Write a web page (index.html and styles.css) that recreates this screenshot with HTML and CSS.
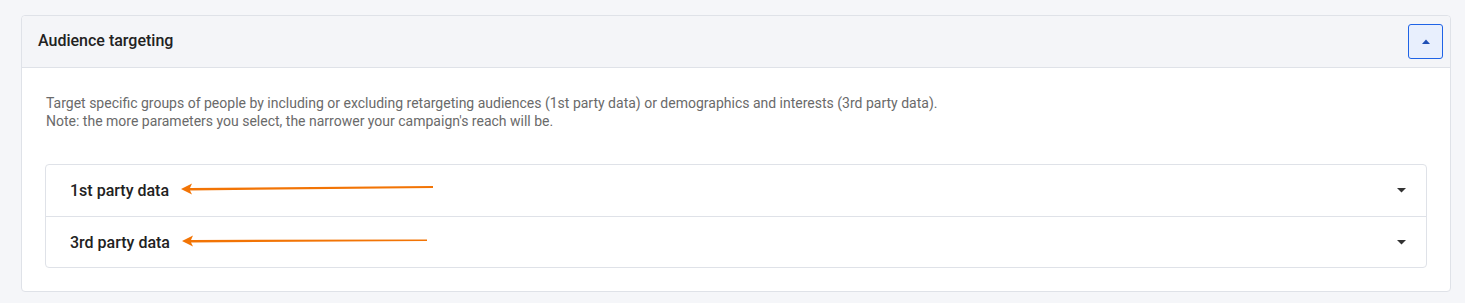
FILE: index.html
```html
<!DOCTYPE html>
<html lang="en">
<head>
    <meta charset="UTF-8">
    <meta name="viewport" content="width=device-width, initial-scale=1.0">
    <title>Audience targeting</title>
    <link rel="stylesheet" href="styles.css">
</head>
<body>

<!-- Pannello targeting -->
<div class="card">
    <div class="card-header">
        <h2>Audience targeting</h2>
        <button class="toggle" type="button">
            <svg width="8" height="5" viewBox="0 0 8 5"><path d="M0 5 L4 0.5 L8 5 Z" fill="#1f4fb5"/></svg>
        </button>
    </div>
    <div class="card-body">
        <p class="intro">Target specific groups of people by including or excluding retargeting audiences (1st party data) or demographics and interests (3rd party data).<br>Note: the more parameters you select, the narrower your campaign's reach will be.</p>
        <div class="accordion">
            <div class="row">
                <span>1st party data</span>
                <svg width="9" height="5" viewBox="0 0 9 5"><path d="M0 0 L9 0 L4.5 4.5 Z" fill="#333"/></svg>
            </div>
            <div class="row">
                <span>3rd party data</span>
                <svg width="9" height="5" viewBox="0 0 9 5"><path d="M0 0 L9 0 L4.5 4.5 Z" fill="#333"/></svg>
            </div>
        </div>
    </div>
</div>

<!-- Frecce di annotazione -->
<svg class="marks" width="1465" height="303" viewBox="0 0 1465 303">
    <path d="M181 189 L192 183.5 L190 188 L433 186 L433 188 L190 190.5 L192 194.5 Z" fill="#f27405"/>
    <path d="M182 241 L193 235.5 L191 240 L427 239.5 L427 241 L191 242.5 L193 246.5 Z" fill="#f27405"/>
</svg>

</body>
</html>
```

FILE: styles.css
```css
/* Impostazioni generali */
body {
    margin: 0;
    padding: 15px 14px 12px 21px;
    font-family: Roboto, "Liberation Sans", Arial, sans-serif;
    background-color: #f5f6f9;
    position: relative;
}

.card {
    background: #fff;
    border: 1px solid #dfe2e8;
    border-radius: 4px;
}

.card-header {
    display: flex;
    align-items: center;
    justify-content: space-between;
    height: 51px;
    padding: 0 7px 0 16px;
    background: #f4f5f8;
    border-bottom: 1px solid #dfe2e8;
    border-radius: 4px 4px 0 0;
}

.card-header h2 {
    margin: -2px 0 0 0;
    font-size: 16px;
    font-weight: 500;
    color: #222;
}

.toggle {
    width: 35px;
    height: 35px;
    padding: 0;
    display: flex;
    align-items: center;
    justify-content: center;
    background: #e8effd;
    border: 1px solid #1f63e6;
    border-radius: 3px;
}

.card-body {
    padding: 26px 23px 23px 23px;
}

.intro {
    margin: 0 0 34px 1px;
    font-size: 14px;
    line-height: 18px;
    color: #6a6a6a;
}

.accordion {
    border: 1px solid #dfe2e8;
    border-radius: 4px;
}

.row {
    display: flex;
    align-items: center;
    justify-content: space-between;
    height: 51px;
    padding: 0 20px 0 24px;
    font-size: 16px;
    font-weight: 500;
    color: #222;
}

.row + .row {
    border-top: 1px solid #dfe2e8;
    height: 50px;
}

/* Sovrapposizione frecce */
.marks {
    position: absolute;
    top: 0;
    left: 0;
    pointer-events: none;
}
```
